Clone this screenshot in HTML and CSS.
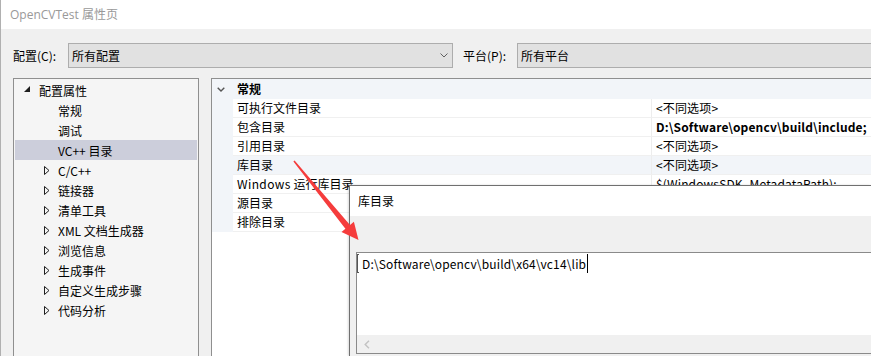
FILE: index.html
```html
<!DOCTYPE html>
<html lang="zh-CN">
<head>
    <meta charset="UTF-8">
    <title>OpenCVTest 属性页</title>
    <link rel="stylesheet" href="styles.css">
</head>
<body>
    <div class="window">
        <div class="titlebar">OpenCVTest 属性页</div>

        <div class="config-bar">
            <div class="config-label">配置(C):</div>
            <div class="combo combo-config">
                <span>所有配置</span>
                <svg class="combo-arrow" width="8" height="5" viewBox="0 0 8 5"><path d="M0.5 0.5 L4 4 L7.5 0.5" fill="none" stroke="#606060" stroke-width="1"/></svg>
            </div>
            <div class="config-label platform-label">平台(P):</div>
            <div class="combo combo-platform"><span>所有平台</span></div>
        </div>

        <div class="main">
            <div class="tree">
                <div class="tree-row root">
                    <span class="exp"><svg width="7" height="6" viewBox="0 0 7 6"><path d="M6 0 L6 6 L0 6 Z" fill="#1e1e1e"/></svg></span>配置属性
                </div>
                <div class="tree-row child"><span class="exp"></span>常规</div>
                <div class="tree-row child"><span class="exp"></span>调试</div>
                <div class="tree-row child selected"><span class="exp"></span>VC++ 目录</div>
                <div class="tree-row child"><span class="exp"><svg width="6" height="9" viewBox="0 0 6 9"><path d="M0.5 0.5 L5 4.5 L0.5 8.5 Z" fill="none" stroke="#1e1e1e"/></svg></span>C/C++</div>
                <div class="tree-row child"><span class="exp"><svg width="6" height="9" viewBox="0 0 6 9"><path d="M0.5 0.5 L5 4.5 L0.5 8.5 Z" fill="none" stroke="#1e1e1e"/></svg></span>链接器</div>
                <div class="tree-row child"><span class="exp"><svg width="6" height="9" viewBox="0 0 6 9"><path d="M0.5 0.5 L5 4.5 L0.5 8.5 Z" fill="none" stroke="#1e1e1e"/></svg></span>清单工具</div>
                <div class="tree-row child"><span class="exp"><svg width="6" height="9" viewBox="0 0 6 9"><path d="M0.5 0.5 L5 4.5 L0.5 8.5 Z" fill="none" stroke="#1e1e1e"/></svg></span>XML 文档生成器</div>
                <div class="tree-row child"><span class="exp"><svg width="6" height="9" viewBox="0 0 6 9"><path d="M0.5 0.5 L5 4.5 L0.5 8.5 Z" fill="none" stroke="#1e1e1e"/></svg></span>浏览信息</div>
                <div class="tree-row child"><span class="exp"><svg width="6" height="9" viewBox="0 0 6 9"><path d="M0.5 0.5 L5 4.5 L0.5 8.5 Z" fill="none" stroke="#1e1e1e"/></svg></span>生成事件</div>
                <div class="tree-row child"><span class="exp"><svg width="6" height="9" viewBox="0 0 6 9"><path d="M0.5 0.5 L5 4.5 L0.5 8.5 Z" fill="none" stroke="#1e1e1e"/></svg></span>自定义生成步骤</div>
                <div class="tree-row child"><span class="exp"><svg width="6" height="9" viewBox="0 0 6 9"><path d="M0.5 0.5 L5 4.5 L0.5 8.5 Z" fill="none" stroke="#1e1e1e"/></svg></span>代码分析</div>
            </div>

            <div class="grid">
                <div class="grid-row category">
                    <div class="gutter"><svg width="8" height="5" viewBox="0 0 8 5"><path d="M0.7 0.7 L4 4 L7.3 0.7" fill="none" stroke="#555" stroke-width="1.4"/></svg></div>
                    <div class="name">常规</div>
                </div>
                <div class="grid-row">
                    <div class="gutter"></div>
                    <div class="name">可执行文件目录</div>
                    <div class="value">&lt;不同选项&gt;</div>
                </div>
                <div class="grid-row">
                    <div class="gutter"></div>
                    <div class="name">包含目录</div>
                    <div class="value bold">D:\Software\opencv\build\include;</div>
                </div>
                <div class="grid-row">
                    <div class="gutter"></div>
                    <div class="name">引用目录</div>
                    <div class="value">&lt;不同选项&gt;</div>
                </div>
                <div class="grid-row hover">
                    <div class="gutter"></div>
                    <div class="name">库目录</div>
                    <div class="value">&lt;不同选项&gt;</div>
                </div>
                <div class="grid-row">
                    <div class="gutter"></div>
                    <div class="name"><span class="latin">Windows</span> 运行库目录</div>
                    <div class="value">$(WindowsSDK_MetadataPath);</div>
                </div>
                <div class="grid-row">
                    <div class="gutter"></div>
                    <div class="name">源目录</div>
                    <div class="value"></div>
                </div>
                <div class="grid-row">
                    <div class="gutter"></div>
                    <div class="name">排除目录</div>
                    <div class="value"></div>
                </div>
            </div>
        </div>

        <div class="dialog">
            <div class="dialog-title">库目录</div>
            <div class="dialog-body">
                <div class="textbox">
                    <div class="text-line"><span class="focus-mark"></span><span class="caret">D:\Software\opencv\build\x64\vc14\lib</span></div>
                    <div class="hscroll">
                        <svg width="6" height="9" viewBox="0 0 6 9"><path d="M5 0.8 L1.2 4.5 L5 8.2" fill="none" stroke="#c2c2c2" stroke-width="1.4"/></svg>
                    </div>
                </div>
            </div>
        </div>

        <svg class="arrow" width="870" height="356" viewBox="1 0 870 356">
            <polygon points="293.4,161.5 345.4,228.8 341.5,232 358.5,240 353.9,221.8 350,225 294.6,160.5" fill="#f53c3c"/>
        </svg>
    </div>
</body>
</html>
```

FILE: styles.css
```css
body {
    margin: 0;
    width: 871px;
    height: 356px;
    overflow: hidden;
    background-color: #f0f0f0;
    font-family: "Noto Sans CJK SC", "Noto Sans", sans-serif;
    font-size: 12px;
    color: #000;
}
.window {
    position: relative;
    height: 356px;
    overflow: hidden;
    border-left: 1px solid #b0b0b0;
    box-sizing: border-box;
}
.titlebar {
    height: 29px;
    line-height: 29px;
    padding-left: 9px;
    background-color: #fff;
    color: #999;
    font-family: "Open Sans", "Noto Sans CJK SC", sans-serif;
}
.config-bar {
    display: flex;
    height: 49px;
    box-sizing: border-box;
    padding-top: 14px;
    padding-left: 12px;
}
.config-label {
    width: 55px;
    line-height: 25px;
}
.platform-label {
    width: 54px;
    margin-left: 10px;
}
.combo {
    display: flex;
    align-items: center;
    height: 25px;
    box-sizing: border-box;
    border: 1px solid #adadad;
    background-color: #e1e1e1;
    padding-left: 3px;
}
.combo-config { width: 385px; }
.combo-platform { flex: 1; border-right: none; }
.combo-arrow {
    margin-left: auto;
    margin-right: 4px;
}
.main {
    display: flex;
    gap: 12px;
    padding-left: 12px;
    height: 278px;
}
.tree {
    width: 186px;
    box-sizing: border-box;
    border: 1px solid #8f8f8f;
    border-bottom: none;
    background-color: #f5f5f5;
    padding: 1px;
}
.tree-row {
    display: flex;
    align-items: center;
    height: 20px;
    white-space: nowrap;
}
.tree-row.root { padding-left: 9px; }
.tree-row.child { padding-left: 29px; }
.tree-row.selected { background-color: #cccedb; }
.exp {
    display: inline-flex;
    align-items: center;
    width: 14px;
    height: 20px;
}
.root .exp {
    width: 15px;
    padding-bottom: 2px;
    box-sizing: border-box;
}
.grid {
    flex: 1;
    min-width: 0;
    overflow: hidden;
    border-left: 1px solid #8f8f8f;
    border-top: 1px solid #8f8f8f;
    background-color: #fff;
}
.grid-row {
    display: flex;
    height: 19px;
    line-height: 18px;
    white-space: nowrap;
}
.gutter {
    width: 21px;
    flex: none;
    background-color: #f2f5f9;
    display: flex;
    align-items: center;
    justify-content: center;
    padding-right: 4px;
    box-sizing: border-box;
}
.name {
    width: 419px;
    flex: none;
    box-sizing: border-box;
    padding-left: 4px;
    border-right: 1px solid #ededed;
    border-bottom: 1px solid #f0f0f0;
}
.latin { letter-spacing: 0.4px; }
.value {
    flex: 1;
    min-width: 0;
    padding-left: 4px;
    border-bottom: 1px solid #f0f0f0;
    overflow: hidden;
    letter-spacing: 0.15px;
}
.value.bold { font-weight: bold; }
.grid-row.category {
    height: 20px;
    line-height: 20px;
    background-color: #f2f5f9;
}
.category .name {
    font-weight: bold;
    border: none;
}
.grid-row.hover .name,
.grid-row.hover .value { background-color: #f2f5f9; }
.dialog {
    position: absolute;
    left: 348px;
    top: 185px;
    right: 0;
    bottom: 0;
    border: 1px solid #707070;
    border-right: none;
    border-bottom: none;
    background-color: #f0f0f0;
    box-shadow: -1px 0 2px rgba(0, 0, 0, 0.15);
}
.dialog-title {
    height: 30px;
    line-height: 30px;
    padding-left: 8px;
    background-color: #fff;
}
.dialog-body {
    padding: 36px 0 0 6px;
}
.textbox {
    position: relative;
    height: 102px;
    box-sizing: border-box;
    border: 1px solid #8a8a8a;
    border-right: none;
    background-color: #fff;
    padding-top: 1px;
}
.text-line {
    display: flex;
    height: 19px;
    line-height: 19px;
    letter-spacing: 0.15px;
}
.focus-mark {
    width: 2px;
    height: 19px;
    margin-right: 3px;
    box-sizing: border-box;
    border: 1px solid #555;
    border-right: none;
}
.caret {
    border-right: 1px solid #000;
    padding-right: 1px;
}
.hscroll {
    position: absolute;
    left: 0;
    right: 0;
    bottom: 0;
    height: 18px;
    background-color: #f0f0f0;
    display: flex;
    align-items: center;
    padding-left: 7px;
}
.arrow {
    position: absolute;
    left: 0;
    top: 0;
    pointer-events: none;
}
```
